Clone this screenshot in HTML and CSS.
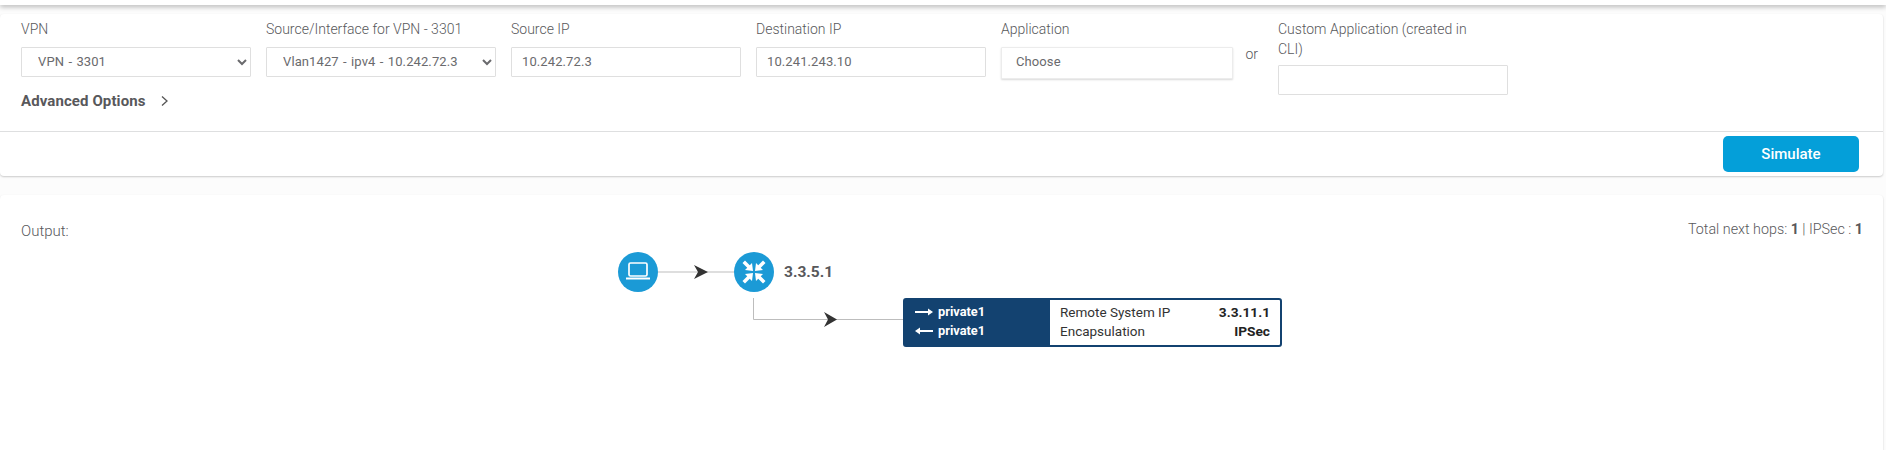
FILE: index.html
```html
<!DOCTYPE html>
<html lang="en">
<head>
<meta charset="utf-8">
<title>Simulate Flows</title>
<link rel="stylesheet" href="styles.css">
</head>
<body>
<div class="topbar"></div>
<main class="page">
  <section class="card form-card">
    <div class="form-body">
      <div class="fields">
        <div class="field">
          <label class="label">VPN</label>
          <select class="control select"><option>VPN - 3301</option></select>
        </div>
        <div class="field">
          <label class="label">Source/Interface for VPN - 3301</label>
          <select class="control select"><option>Vlan1427 - ipv4 - 10.242.72.3</option></select>
        </div>
        <div class="field">
          <label class="label">Source IP</label>
          <input class="control" value="10.242.72.3">
        </div>
        <div class="field">
          <label class="label">Destination IP</label>
          <input class="control" value="10.241.243.10">
        </div>
        <div class="field field-app">
          <label class="label">Application</label>
          <div class="control chooser">Choose</div>
        </div>
        <div class="or">or</div>
        <div class="field field-custom">
          <label class="label label-wrap">Custom Application (created in CLI)</label>
          <input class="control">
        </div>
      </div>
      <div class="advanced">
        <span>Advanced Options</span>
        <svg class="adv-chevron" width="10" height="12" viewBox="0 0 10 12"><path d="M2 1.500 7 6 2 10.500" fill="none" stroke="#555" stroke-width="1.300"/></svg>
      </div>
    </div>
    <div class="form-footer">
      <button class="btn-primary">Simulate</button>
    </div>
  </section>

  <section class="card output-card">
    <div class="output-head">
      <span class="output-title">Output:</span>
      <span class="summary">Total next hops: <b>1</b> | IPSec : <b>1</b></span>
    </div>
    <div class="diagram">
      <svg class="wires" width="1886" height="255" viewBox="0 0 1886 255">
        <path d="M658 77H734" class="wire"/>
        <path d="M753.500 103V124.500H903" class="wire"/>
        <path d="M694 70 708 77 694 84 698 77Z" class="head"/>
        <path d="M824 117 837 124.500 824 132 828 124.500Z" class="head"/>
      </svg>
      <div class="node node-host">
        <svg width="40" height="40" viewBox="0 0 40 40">
          <rect x="11" y="11" width="18" height="13" rx="1.500" fill="none" stroke="#fff" stroke-width="1.700"/>
          <path d="M8 26.500H32" stroke="#fff" stroke-width="2"/>
        </svg>
      </div>
      <div class="node node-router">
        <svg width="40" height="40" viewBox="0 0 40 40" fill="#fff">
          <path d="M19 19 11 18 13.250 15.750 8.500 11 11 8.500 15.750 13.250 18 11Z"/>
          <path d="M21 19 29 18 26.750 15.750 31.500 11 29 8.500 24.250 13.250 22 11Z"/>
          <path d="M19 21 11 22 13.250 24.250 8.500 29 11 31.500 15.750 26.750 18 29Z"/>
          <path d="M21 21 29 22 26.750 24.250 31.500 29 29 31.500 24.250 26.750 22 29Z"/>
        </svg>
      </div>
      <div class="node-label">3.3.5.1</div>
      <div class="tunnel">
        <div class="tunnel-side">
          <div class="tunnel-line">
            <svg width="18" height="8" viewBox="0 0 18 8"><path d="M0 4H14" stroke="#fff" stroke-width="2"/><path d="M13 .5 18 4 13 7.500Z" fill="#fff"/></svg>
            <span>private1</span>
          </div>
          <div class="tunnel-line">
            <svg width="18" height="8" viewBox="0 0 18 8"><path d="M4 4H18" stroke="#fff" stroke-width="2"/><path d="M5 .5 0 4 5 7.500Z" fill="#fff"/></svg>
            <span>private1</span>
          </div>
        </div>
        <div class="tunnel-info">
          <div class="info-row"><span>Remote System IP</span><b>3.3.11.1</b></div>
          <div class="info-row"><span>Encapsulation</span><b>IPSec</b></div>
        </div>
      </div>
    </div>
  </section>
</main>
</body>
</html>
```

FILE: styles.css
```css
* { box-sizing: border-box; }
html, body { margin: 0; height: 450px; overflow: hidden; }
body {
  background: #fcfcfc;
  font-family: Roboto, "Liberation Sans", sans-serif;
  color: #58585b;
  font-size: 13px;
}
.topbar {
  height: 5px;
  background: #fff;
  box-shadow: 0 2px 5px rgba(0, 0, 0, .28);
  position: relative;
}
.page {
  padding: 9px 3px 0 0;
  display: flex;
  flex-direction: column;
  gap: 19px;
}
.card {
  background: #fff;
  border-radius: 4px;
  box-shadow: 0 1px 2px rgba(0, 0, 0, .2);
}
.form-body {
  height: 118px;
  padding: 6px 21px 0;
  border-bottom: 1px solid #dedfe0;
}
.fields { display: flex; gap: 15.500px; align-items: flex-start; }
.field { width: 229.500px; display: flex; flex-direction: column; }
.field-app { width: 232px; }
.field-custom { width: 230px; margin-left: -9px; }
.label {
  font-size: 14px;
  font-weight: 300;
  line-height: 19.500px;
  height: 27px;
  color: #58585b;
  white-space: nowrap;
}
.label-wrap { white-space: normal; height: 45px; width: 205px; }
.control {
  display: block;
  width: 100%;
  height: 30px;
  padding: 0 12px;
  border: 1px solid #dfdfdf;
  border-radius: 1px;
  background: #fff;
  color: #6a6a6d;
  font: 400 13px Roboto, "Liberation Sans", sans-serif;
  letter-spacing: .1px;
  outline: none;
}
input.control { padding: 0 10px 2px; }
select.control { padding-bottom: 2px; word-spacing: 1px; }
.chooser {
  display: flex;
  align-items: center;
  height: 32px;
  padding: 0 14px 4px;
  box-shadow: 0 1px 2px rgba(0, 0, 0, .15);
  border-color: #ececec;
}
.or {
  width: 26px;
  margin-left: -3px;
  padding-top: 26px;
  font-size: 14px;
  font-weight: 300;
  text-align: left;
}
.advanced {
  margin-top: -3px;
  display: flex;
  align-items: center;
  gap: 14px;
  font-size: 15px;
  letter-spacing: .1px;
  font-weight: 700;
  color: #58585b;
  line-height: 18px;
}
.form-footer {
  height: 44px;
  display: flex;
  justify-content: flex-end;
  align-items: flex-start;
  padding: 4px 24px 0 0;
}
.btn-primary {
  width: 136px;
  height: 36px;
  border: 0;
  border-radius: 5px;
  background: #049fd9;
  color: #fff;
  font: 500 15px Roboto, "Liberation Sans", sans-serif;
}
.output-card { height: 300px; position: relative; }
.output-head {
  display: flex;
  justify-content: space-between;
  padding: 27px 20px 0 21px;
}
.output-title { font-size: 15px; font-weight: 300; line-height: 18px; }
.summary { font-size: 14.300px; font-weight: 300; line-height: 18px; margin-top: -2px; color: #58585b; }
.summary b { font-weight: 700; }
.diagram { position: absolute; left: 0; top: 0; width: 100%; height: 255px; }
.wires { position: absolute; left: 0; top: 0; }
.wire { fill: none; stroke: #bdbdbd; stroke-width: 1; }
.head { fill: #333; }
.node {
  position: absolute;
  width: 40px;
  height: 40px;
  border-radius: 50%;
  background: #1b9ad6;
  display: flex;
}
.node-host { left: 618px; top: 57px; }
.node-router { left: 734px; top: 57px; }
.node-label {
  position: absolute;
  left: 784px;
  top: 68px;
  font-size: 15.500px;
  font-weight: 700;
  color: #58585b;
  line-height: 18px;
}
.tunnel {
  position: absolute;
  left: 903px;
  top: 103px;
  width: 379px;
  height: 49px;
  display: flex;
  border: 2px solid #134270;
  border-radius: 3px;
  background: #fff;
}
.tunnel-side {
  width: 145px;
  background: #134270;
  color: #fff;
  font-size: 12.800px;
  font-weight: 700;
  padding: 2px 0 0 10px;
}
.tunnel-line { display: flex; align-items: center; gap: 5px; height: 19px; }
.tunnel-info { flex: 1; padding: 3px 10px 0 10px; color: #333; font-size: 13.500px; }
.info-row { display: flex; justify-content: space-between; height: 19px; line-height: 19px; }
.info-row b { font-weight: 700; color: #222; font-size: 13.700px; }
```
